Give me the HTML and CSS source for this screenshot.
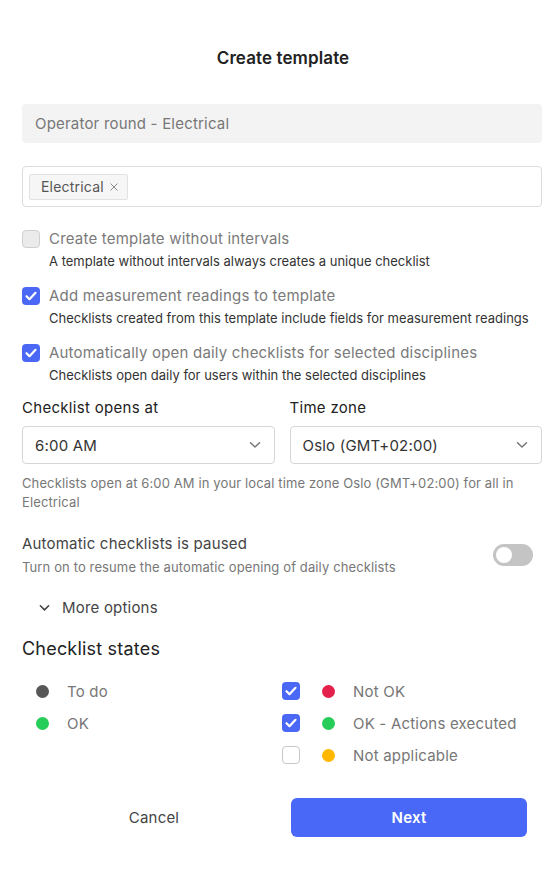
FILE: index.html
```html
<!DOCTYPE html>
<html>
<head>
<meta charset="utf-8">
<link rel="stylesheet" href="styles.css">
</head>
<body>
<div class="dialog">
  <h1 class="title">Create template</h1>

  <div class="input filled">Operator round - Electrical</div>

  <div class="input tags">
    <span class="chip">Electrical<svg class="chip-x" viewBox="0 0 10 10"><path d="M1.5 1.5l7 7M8.5 1.5l-7 7" stroke="#8a8a8a" stroke-width="1" fill="none"/></svg></span>
  </div>

  <div class="opts">
    <div class="opt">
      <span class="cb off"></span>
      <div class="opt-body">
        <div class="opt-label">Create template without intervals</div>
        <div class="opt-desc">A template without intervals always creates a unique checklist</div>
      </div>
    </div>
    <div class="opt">
      <span class="cb on"><svg viewBox="0 0 18 18"><path d="M4.5 9.2l3 3 6-6.4" fill="none" stroke="#fff" stroke-width="2.2" stroke-linecap="round" stroke-linejoin="round"/></svg></span>
      <div class="opt-body">
        <div class="opt-label">Add measurement readings to template</div>
        <div class="opt-desc">Checklists created from this template include fields for measurement readings</div>
      </div>
    </div>
    <div class="opt">
      <span class="cb on"><svg viewBox="0 0 18 18"><path d="M4.5 9.2l3 3 6-6.4" fill="none" stroke="#fff" stroke-width="2.2" stroke-linecap="round" stroke-linejoin="round"/></svg></span>
      <div class="opt-body">
        <div class="opt-label">Automatically open daily checklists for selected disciplines</div>
        <div class="opt-desc">Checklists open daily for users within the selected disciplines</div>
      </div>
    </div>
  </div>

  <div class="selects">
    <div class="field">
      <div class="field-label">Checklist opens at</div>
      <div class="select"><span>6:00 AM</span><svg class="chev" viewBox="0 0 12 8"><path d="M1.5 1.8l4.5 4.2 4.5-4.2" fill="none" stroke="#777" stroke-width="1.5" stroke-linecap="round" stroke-linejoin="round"/></svg></div>
    </div>
    <div class="field">
      <div class="field-label">Time zone</div>
      <div class="select"><span>Oslo (GMT+02:00)</span><svg class="chev" viewBox="0 0 12 8"><path d="M1.5 1.8l4.5 4.2 4.5-4.2" fill="none" stroke="#777" stroke-width="1.5" stroke-linecap="round" stroke-linejoin="round"/></svg></div>
    </div>
  </div>
  <p class="help">Checklists open at 6:00 AM in your local time zone Oslo (GMT+02:00) for all in Electrical</p>

  <div class="pause">
    <div>
      <div class="pause-label">Automatic checklists is paused</div>
      <div class="pause-desc">Turn on to resume the automatic opening of daily checklists</div>
    </div>
    <span class="toggle"><span class="knob"></span></span>
  </div>

  <div class="more"><svg class="more-chev" viewBox="0 0 12 8"><path d="M1.5 1.5l4.5 4.5 4.5-4.5" fill="none" stroke="#444" stroke-width="1.7" stroke-linecap="round" stroke-linejoin="round"/></svg>More options</div>

  <h2 class="states-title">Checklist states</h2>
  <div class="states">
    <div class="col left">
      <div class="state"><span class="dot gray"></span>To do</div>
      <div class="state"><span class="dot green"></span>OK</div>
    </div>
    <div class="col">
      <div class="state"><span class="cb on sm"><svg viewBox="0 0 18 18"><path d="M4.5 9.2l3 3 6-6.4" fill="none" stroke="#fff" stroke-width="2.2" stroke-linecap="round" stroke-linejoin="round"/></svg></span><span class="dot red"></span>Not OK</div>
      <div class="state"><span class="cb on sm"><svg viewBox="0 0 18 18"><path d="M4.5 9.2l3 3 6-6.4" fill="none" stroke="#fff" stroke-width="2.2" stroke-linecap="round" stroke-linejoin="round"/></svg></span><span class="dot green"></span>OK - Actions executed</div>
      <div class="state"><span class="cb empty sm"></span><span class="dot yellow"></span>Not applicable</div>
    </div>
  </div>

  <div class="actions">
    <button class="btn cancel">Cancel</button>
    <button class="btn next">Next</button>
  </div>
</div>
</body>
</html>
```

FILE: styles.css
```css
* { box-sizing: border-box; }
html, body { margin: 0; padding: 0; background: #fff; }
body {
  font-family: Inter, "Noto Sans", "Liberation Sans", sans-serif;
  color: #333;
  -webkit-font-smoothing: antialiased;
  letter-spacing: 0.2px;
}
.dialog {
  width: 542px;
  padding: 47px 0 0 22px;
}
.title {
  margin: 0 0 35px;
  font-size: 17px;
  line-height: 22px;
  font-weight: 600;
  color: #222;
  text-align: center;
  padding-left: 2px;
  letter-spacing: 0.1px;
}
.input {
  width: 520px;
  border-radius: 4px;
}
.filled {
  height: 39px;
  background: #f3f3f3;
  padding: 0 13px;
  display: flex;
  align-items: center;
  font-size: 15px;
  color: #777;
}
.tags {
  margin-top: 23px;
  height: 41px;
  border: 1px solid #dcdcdc;
  padding: 0 6px;
  display: flex;
  align-items: center;
}
.chip {
  display: inline-flex;
  align-items: center;
  height: 26px;
  padding: 0 8px 0 11px;
  background: #f6f6f6;
  border: 1px solid #e2e2e2;
  border-radius: 2px;
  font-size: 14px;
  color: #555;
}
.chip-x {
  width: 10px;
  height: 10px;
  margin-left: 5px;
}
.opts {
  margin-top: 21px;
  display: flex;
  flex-direction: column;
  gap: 15px;
}
.opt {
  display: flex;
  align-items: flex-start;
}
.cb {
  flex: none;
  width: 18px;
  height: 18px;
  border-radius: 4px;
  margin-top: 2px;
  margin-right: 9px;
  display: inline-flex;
  align-items: center;
  justify-content: center;
}
.cb svg { width: 18px; height: 18px; display: block; }
.cb.off { background: #ebebeb; border: 1.5px solid #cfcfcf; }
.cb.on { background: #4a68f5; }
.cb.empty { background: #fff; border: 1.5px solid #c8c8c8; }
.opt-label {
  font-size: 15px;
  line-height: 22px;
  color: #7a7a7a;
}
.opt-desc {
  margin-top: 2px;
  font-size: 13px;
  line-height: 18px;
  color: #333;
  letter-spacing: 0;
}
.selects {
  margin-top: 13px;
  display: grid;
  grid-template-columns: 1fr 1fr;
  gap: 15px;
  width: 520px;
}
.field-label {
  font-size: 15px;
  line-height: 22px;
  color: #222;
  margin-bottom: 7px;
  letter-spacing: 0.3px;
}
.select {
  height: 38px;
  border: 1px solid #d6d6d6;
  border-radius: 4px;
  padding: 0 12px;
  display: flex;
  align-items: center;
  justify-content: space-between;
  font-size: 15px;
  color: #333;
}
.chev { width: 12px; height: 8px; margin-right: 1px; }
.help {
  margin: 10px 0 0;
  width: 520px;
  font-size: 13px;
  line-height: 19px;
  color: #777;
  letter-spacing: 0.12px;
}
.pause {
  margin-top: 21px;
  width: 511px;
  display: flex;
  align-items: center;
  justify-content: space-between;
}
.pause-label {
  font-size: 15px;
  line-height: 22px;
  color: #444;
}
.pause-desc {
  margin-top: 3px;
  font-size: 13px;
  line-height: 19px;
  color: #777;
  letter-spacing: 0.12px;
}
.toggle {
  width: 40px;
  height: 22px;
  border-radius: 11px;
  background: #c4c4c4;
  display: flex;
  align-items: center;
  padding-left: 3px;
}
.knob {
  width: 16px;
  height: 16px;
  border-radius: 50%;
  background: #fff;
}
.more {
  margin-top: 20px;
  padding-left: 17px;
  display: flex;
  align-items: center;
  font-size: 15px;
  line-height: 22px;
  color: #444;
}
.more-chev { width: 11px; height: 8px; margin-right: 12px; }
.states-title {
  margin: 17px 0 0;
  font-size: 18px;
  line-height: 26px;
  font-weight: 400;
  color: #222;
}
.states {
  margin-top: 18px;
  width: 520px;
  display: grid;
  grid-template-columns: 1fr 1fr;
}
.col { display: flex; flex-direction: column; gap: 10px; }
.col.left { padding-left: 14px; }
.state {
  display: flex;
  align-items: center;
  height: 22px;
  font-size: 15px;
  color: #777;
}
.cb.sm { width: 18px; height: 18px; margin: 0 22px 0 0; }
.dot {
  width: 13px;
  height: 13px;
  border-radius: 50%;
  margin-right: 18px;
  flex: none;
}
.dot.gray { background: #575757; }
.dot.green { background: #26cd58; }
.dot.red { background: #e4204c; }
.dot.yellow { background: #ffb700; }
.actions {
  margin-top: 32px;
  display: flex;
  gap: 5px;
}
.btn {
  font-family: inherit;
  font-size: 15px;
  height: 39px;
  border: none;
  border-radius: 6px;
  cursor: pointer;
  letter-spacing: 0.2px;
}
.cancel {
  width: 264px;
  background: #fff;
  color: #444;
}
.next {
  width: 236px;
  background: #4a68f8;
  color: #fff;
  font-weight: 600;
}
```
